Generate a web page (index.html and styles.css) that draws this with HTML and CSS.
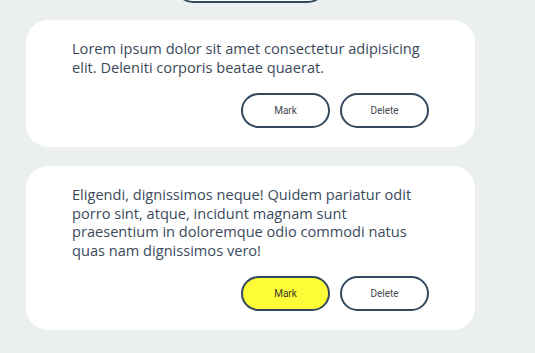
FILE: index.html
```html
<!DOCTYPE html>
<html>
<head>
<meta charset="utf-8">
<link rel="stylesheet" href="styles.css">
</head>
<body>
<div class="page">
  <div class="top-row"><button class="top-btn" type="button" aria-label="Add"></button></div>
  <div class="card">
    <p class="note">Lorem ipsum dolor sit amet consectetur adipisicing elit. Deleniti corporis beatae quaerat.</p>
    <div class="actions">
      <button class="btn" type="button">Mark</button>
      <button class="btn" type="button">Delete</button>
    </div>
  </div>
  <div class="card">
    <p class="note">Eligendi, dignissimos neque! Quidem pariatur odit porro sint, atque, incidunt magnam sunt praesentium in doloremque odio commodi natus quas nam dignissimos vero!</p>
    <div class="actions">
      <button class="btn btn-marked" type="button">Mark</button>
      <button class="btn" type="button">Delete</button>
    </div>
  </div>
</div>
</body>
</html>
```
FILE: styles.css
```css
html, body {
  margin: 0;
  padding: 0;
  background: #ebeff0;
}
body {
  font-family: "Open Sans", "Noto Sans", sans-serif;
  height: 353px;
  overflow: hidden;
}
.page {
  width: 449px;
  margin-left: 26px;
  display: flex;
  flex-direction: column;
  gap: 19px;
}
.top-row {
  display: flex;
  justify-content: center;
  height: 1px;
}
.top-btn {
  width: 151px;
  height: 36px;
  margin-top: -33px;
  border: 2px solid #34495e;
  border-radius: 18px;
  background: #ffffff;
  padding: 0;
}
.card {
  background: #ffffff;
  border-radius: 22px;
  padding: 19px 46px 19px 46px;
}
.note {
  margin: 0 0 17px 0;
  font-size: 14.6px;
  line-height: 18.5px;
  color: #3b4a5b;
}
.actions {
  display: flex;
  justify-content: flex-end;
  gap: 10px;
}
.btn {
  width: 89px;
  height: 35px;
  border: 2px solid #34495e;
  border-radius: 18px;
  background: #ffffff;
  font-family: Roboto, "Liberation Sans", sans-serif;
  font-size: 10px;
  color: #444a52;
  padding: 0;
}
.btn-marked {
  background: #fdfc36;
  color: #3c3c2a;
}
```
